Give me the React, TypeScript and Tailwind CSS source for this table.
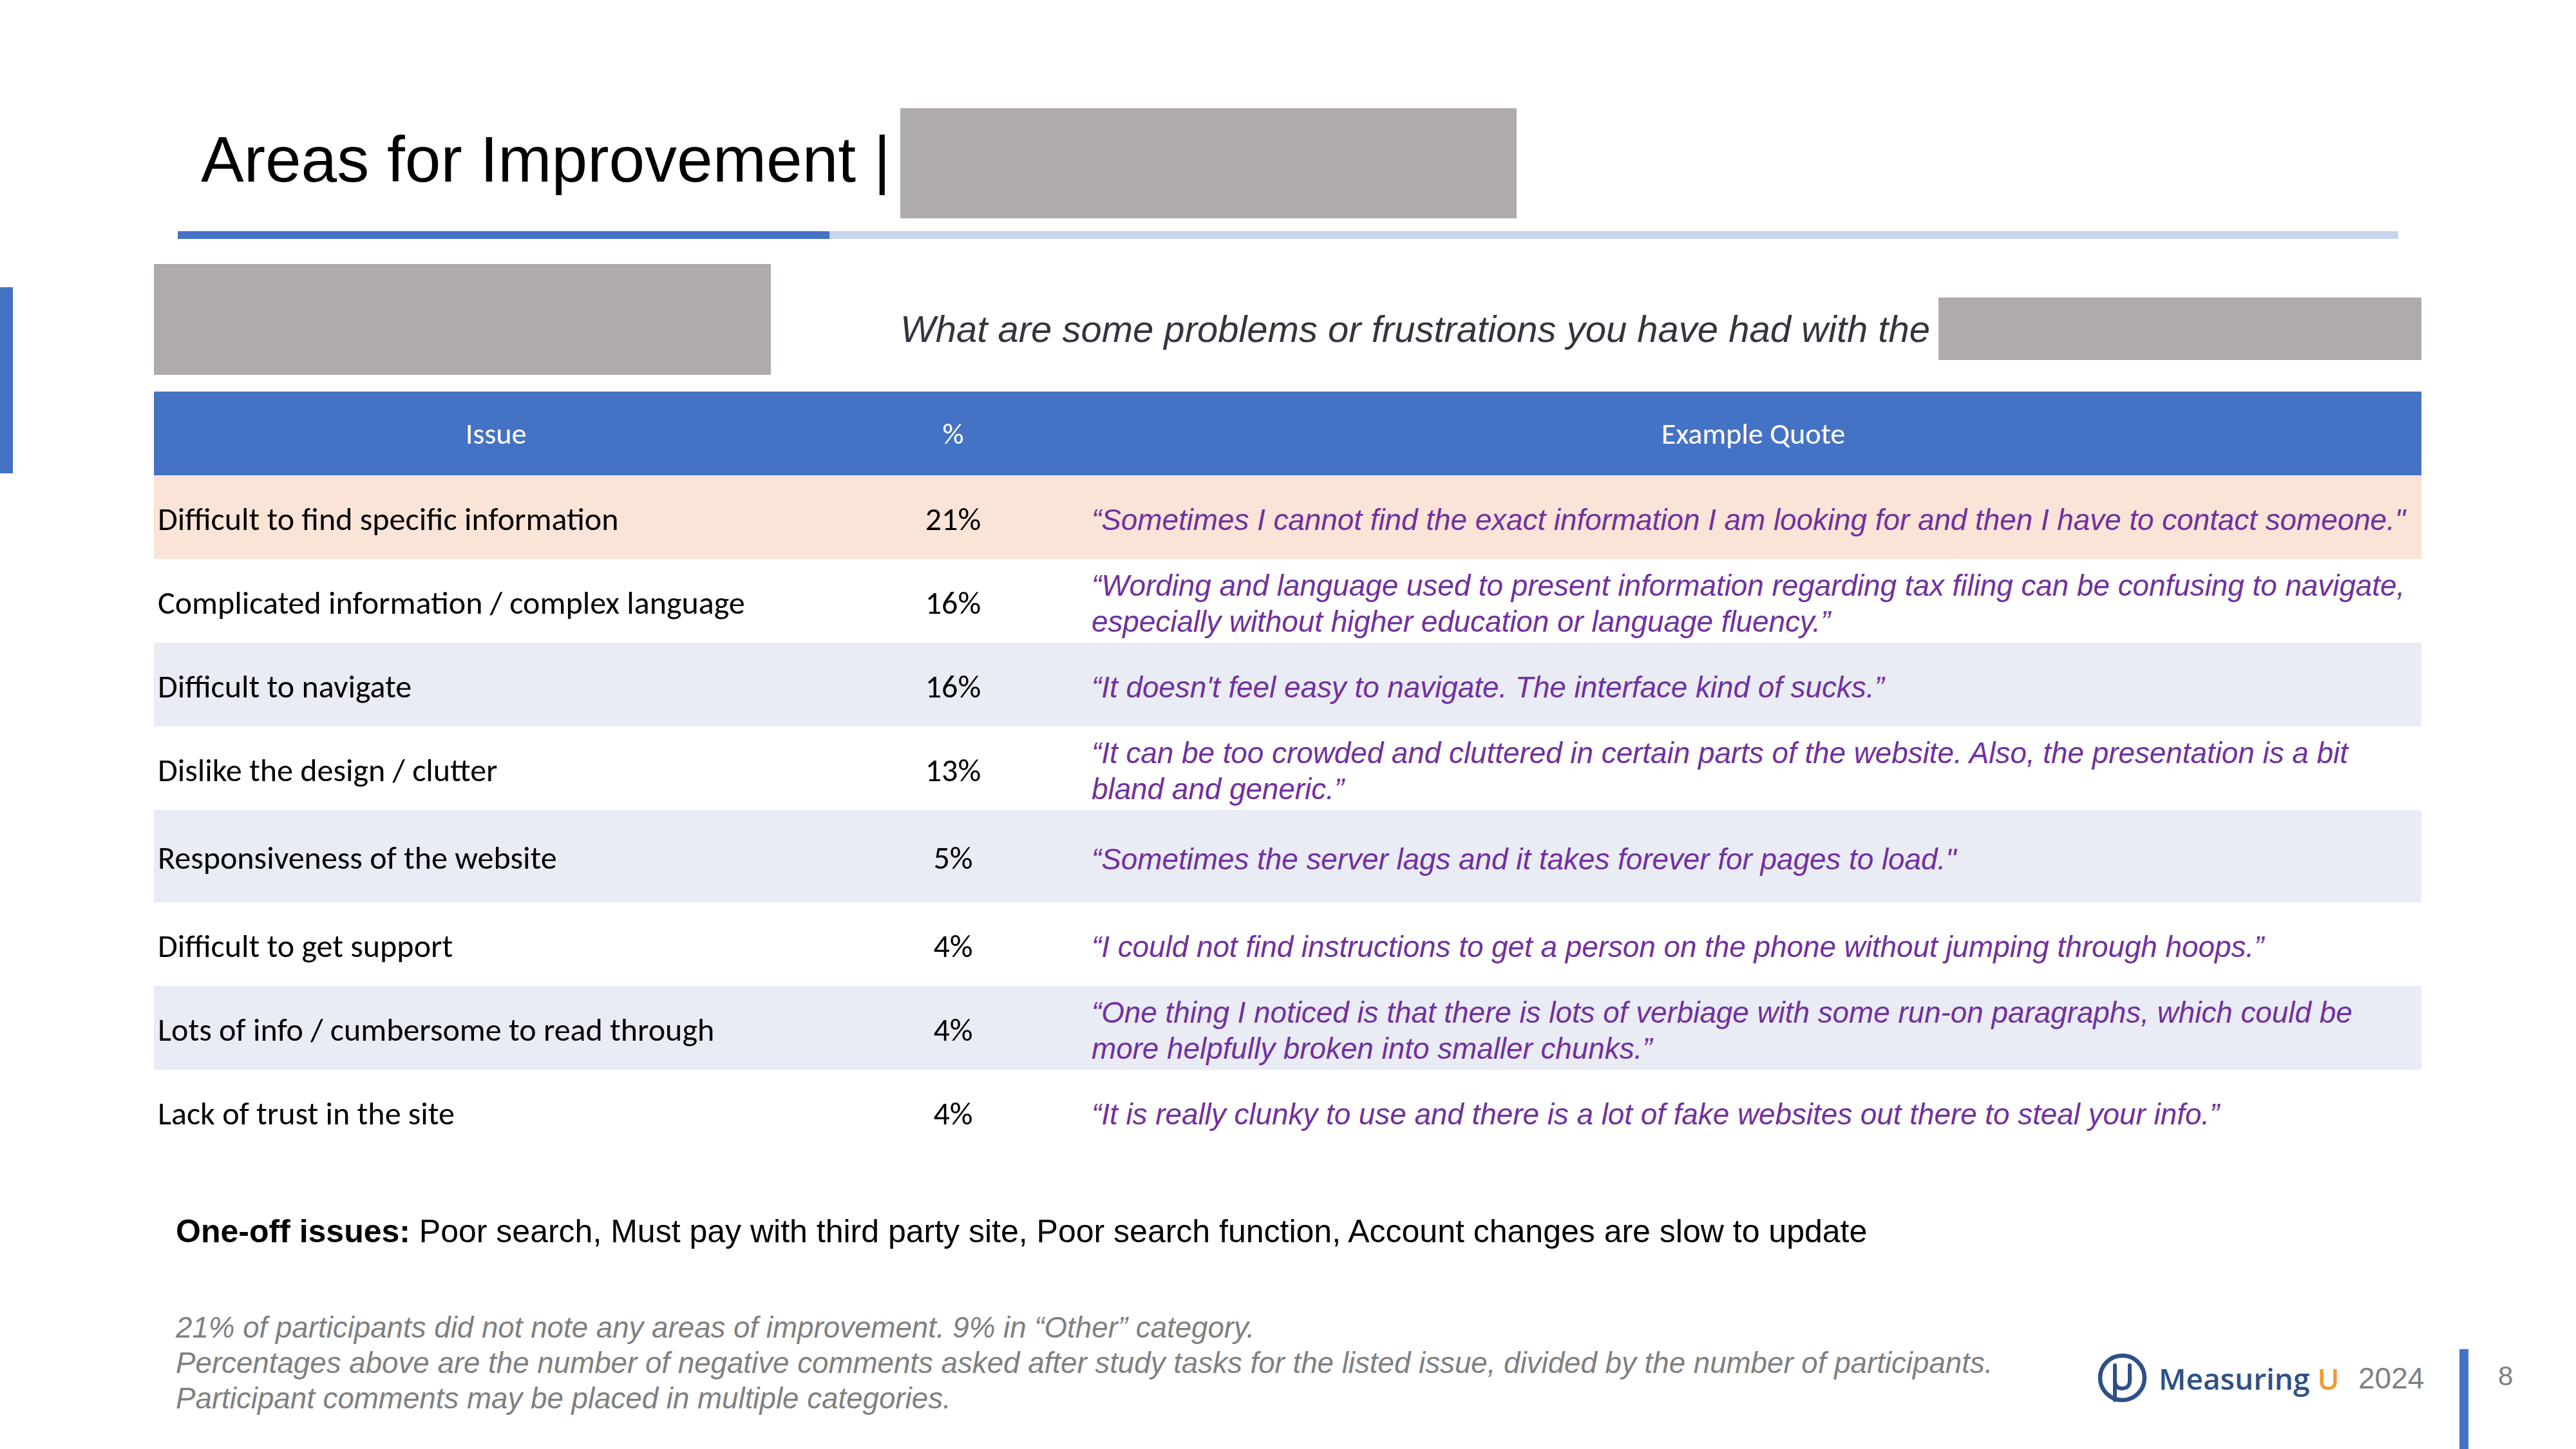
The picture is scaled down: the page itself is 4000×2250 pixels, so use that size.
const rows = [
  {
    issue: "Difficult to find specific information",
    pct: "21%",
    quote: ["“Sometimes I cannot find the exact information I am looking for and then I have to contact someone.\""],
    bg: "bg-[#FAE4D7]",
    h: "h-[130px]",
  },
  {
    issue: "Complicated information / complex language",
    pct: "16%",
    quote: [
      "“Wording and language used to present information regarding tax filing can be confusing to navigate,",
      "especially without higher education or language fluency.”",
    ],
    bg: "bg-white",
    h: "h-[130px]",
  },
  {
    issue: "Difficult to navigate",
    pct: "16%",
    quote: ["“It doesn't feel easy to navigate. The interface kind of sucks.”"],
    bg: "bg-[#E9EBF5]",
    h: "h-[130px]",
  },
  {
    issue: "Dislike the design / clutter",
    pct: "13%",
    quote: [
      "“It can be too crowded and cluttered in certain parts of the website. Also, the presentation is a bit",
      "bland and generic.”",
    ],
    bg: "bg-white",
    h: "h-[130px]",
  },
  {
    issue: "Responsiveness of the website",
    pct: "5%",
    quote: ["“Sometimes the server lags and it takes forever for pages to load.\""],
    bg: "bg-[#E9EBF5]",
    h: "h-[143px]",
  },
  {
    issue: "Difficult to get support",
    pct: "4%",
    quote: ["“I could not find instructions to get a person on the phone without jumping through hoops.”"],
    bg: "bg-white",
    h: "h-[130px]",
  },
  {
    issue: "Lots of info / cumbersome to read through",
    pct: "4%",
    quote: [
      "“One thing I noticed is that there is lots of verbiage with some run-on paragraphs, which could be",
      "more helpfully broken into smaller chunks.”",
    ],
    bg: "bg-[#E9EBF5]",
    h: "h-[130px]",
  },
  {
    issue: "Lack of trust in the site",
    pct: "4%",
    quote: ["“It is really clunky to use and there is a lot of fake websites out there to steal your info.”"],
    bg: "bg-white",
    h: "h-[130px]",
  },
]

function Logo() {
  return (
    <svg width="77" height="77" viewBox="0 0 77 77" fill="none">
      <circle cx="38.5" cy="38.5" r="34.5" stroke="#2D5088" strokeWidth="6.5" />
      <path
        d="M27 19 V43 C27 51 32 55 38.5 55 C45 55 50 51 50 43 V19 M27 43 V73"
        stroke="#2D5088"
        strokeWidth="6"
        strokeLinecap="round"
      />
    </svg>
  )
}

export default function App() {
  return (
    <div className="w-[4000px] h-[2250px] bg-white flex overflow-hidden font-['Liberation_Sans',Arial,sans-serif]">
      {/* left accent */}
      <div className="w-[20px] shrink-0">
        <div className="mt-[446px] h-[289px] bg-[#4472C4]" />
      </div>

      <div className="flex-1 flex flex-col">
        {/* title */}
        <div className="shrink-0 flex items-start pt-[168px] pl-[292px]">
          <h1 className="w-[1086px] mt-[29px] text-[100px] leading-none text-black whitespace-nowrap">
            Areas for Improvement |
          </h1>
          <div className="w-[957px] h-[171px] bg-[#AFABAB]" />
        </div>
        <div className="shrink-0 flex ml-[256px] mt-[20px] h-[12px]">
          <div className="w-[1012px] bg-[#4472C4]" />
          <div className="w-[2436px] bg-[#C6D4EC]" />
        </div>

        {/* question row */}
        <div className="shrink-0 flex items-start ml-[219px] mt-[39px]">
          <div className="w-[958px] h-[172px] bg-[#AFABAB]" />
          <div className="flex items-center w-[2362px] ml-[201px] mt-[52px] h-[97px]">
            <p className="flex-1 italic text-[58px] leading-none text-[#35353F] whitespace-nowrap">
              What are some problems or frustrations you have had with the
            </p>
            <div className="w-[750px] h-[97px] bg-[#AFABAB]" />
          </div>
        </div>

        {/* table */}
        <div className="shrink-0 ml-[219px] mt-[26px] w-[3521px] flex flex-col font-['Carlito','Lato',sans-serif]">
          <div className="grid grid-cols-[1062px_358px_1fr] items-center h-[130px] bg-[#4472C4] text-white text-[46px]">
            <div className="text-center px-[6px]">Issue</div>
            <div className="text-center">%</div>
            <div className="text-center pl-[36px] pr-[10px]">Example Quote</div>
          </div>
          {rows.map((r) => (
            <div key={r.issue} className={`grid grid-cols-[1062px_358px_1fr] items-center ${r.h} ${r.bg}`}>
              <div className="pl-[6px] pt-[4px] text-[50px] text-black whitespace-nowrap">{r.issue}</div>
              <div className="pt-[4px] text-center text-[50px] text-black">{r.pct}</div>
              <div className="pl-[36px] pt-[10px] italic text-[45.8px] leading-[56px] text-[#7030A0] whitespace-nowrap font-['Liberation_Sans',Arial,sans-serif]">
                {r.quote.map((line) => (
                  <div key={line}>{line}</div>
                ))}
              </div>
            </div>
          ))}
        </div>

        {/* one-off issues */}
        <p className="shrink-0 ml-[253px] mt-[96px] text-[50px] leading-none text-black whitespace-nowrap">
          <span className="font-bold">One-off issues:</span> Poor search, Must pay with third party site, Poor search
          function, Account changes are slow to update
        </p>

        {/* footer */}
        <div className="shrink-0 flex items-start mt-[97px]">
          <div className="ml-[253px] w-[2984px] italic text-[45.7px] leading-[55px] text-[#7F7F7F] whitespace-nowrap">
            <div>21% of participants did not note any areas of improvement. 9% in “Other” category.</div>
            <div>
              Percentages above are the number of negative comments asked after study tasks for the listed issue,
              divided by the number of participants.
            </div>
            <div>Participant comments may be placed in multiple categories.</div>
          </div>
          <div className="flex items-center mt-[67px] h-[77px]">
            <Logo />
            <span className="ml-[18px] w-[310px] font-['Open_Sans',sans-serif] font-semibold text-[46px] leading-none text-[#2D5088] whitespace-nowrap">
              Measuring <span className="text-[#F39A2B]">U</span>
            </span>
            <span className="w-[157px] text-[46px] leading-none text-[#808080]">2024</span>
          </div>
          <div className="w-[14px] h-[155px] mt-[61px] bg-[#4472C4]" />
          <span className="ml-[46px] mt-[82px] text-[42px] leading-none text-[#808080]">8</span>
        </div>
      </div>
    </div>
  )
}
